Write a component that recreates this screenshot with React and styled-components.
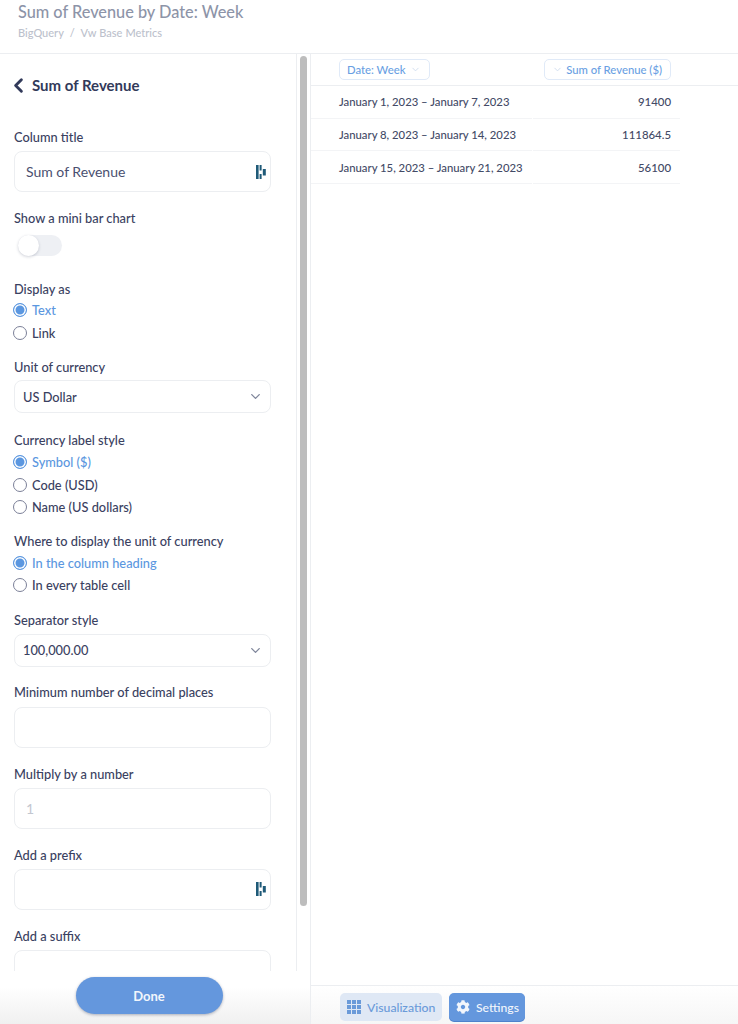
import React from 'react'
import styled, { createGlobalStyle } from 'styled-components'
import { ChevronDown, ChevronLeft } from 'lucide-react'
import { FaCog } from 'react-icons/fa'

const GlobalStyle = createGlobalStyle`
  html, body {
    margin: 0;
    background: #fff;
  }
  * {
    box-sizing: border-box;
  }
  body {
    font-family: Lato, "Liberation Sans", sans-serif;
    color: #2e3553;
  }
`

const Page = styled.div`
  width: 738px;
  height: 1024px;
  display: flex;
  flex-direction: column;
  overflow: hidden;
`

const Header = styled.header`
  height: 54px;
  flex: none;
  padding-left: 18px;
  border-bottom: 1px solid #eceef1;
`

const Title = styled.h1`
  margin: 0;
  padding-top: 1px;
  font-size: 16.3px;
  line-height: 22px;
  font-weight: 500;
  color: #8d94a8;
`

const Crumbs = styled.div`
  margin-top: 3px;
  font-size: 11px;
  line-height: 14px;
  font-weight: 500;
  color: #bcc1cc;
  word-spacing: 0.3px;
`

const Body = styled.div`
  flex: 1;
  display: flex;
  min-height: 0;
`

const Sidebar = styled.aside`
  position: relative;
  width: 311px;
  flex: none;
  display: flex;
  flex-direction: column;
  border-right: 1px solid #eceef1;
`

const Scroller = styled.div`
  flex: 1;
  min-height: 0;
  overflow: hidden;
  padding: 0 0 0 14px;
  margin-right: 13px;
  border-right: 1px solid #eceef1;
`

const Thumb = styled.div`
  position: absolute;
  top: 2px;
  right: 3px;
  width: 7px;
  height: 850px;
  border-radius: 4px;
  background: #bdbdbd;
`

const BackRow = styled.div`
  display: flex;
  align-items: center;
  height: 20px;
  margin-top: 21px;
  margin-bottom: 33px;
  gap: 2px;
  font-size: 15px;
  font-weight: 700;
  color: #323a5a;
  svg {
    margin-left: -7px;
  }
`

const Field = styled.div`
  width: 257px;
  margin-bottom: ${p => p.$after || 17}px;
`

const Label = styled.div`
  font-size: 12.8px;
  line-height: 18px;
  font-weight: 500;
  color: #3a4161;
  margin-bottom: ${p => p.$gap ?? 5}px;
`

const InputBox = styled.div`
  position: relative;
  height: 41px;
  padding-left: 11px;
  display: flex;
  align-items: center;
  border: 1px solid #eceef1;
  border-radius: 8px;
  font-size: 14px;
  color: ${p => (p.$placeholder ? '#c3c7d0' : '#4a5070')};
`

const SelectBox = styled.div`
  height: 33px;
  padding: 0 7px 0 8px;
  display: flex;
  align-items: center;
  justify-content: space-between;
  border: 1px solid #eceef1;
  border-radius: 8px;
  font-size: 12.8px;
  font-weight: 500;
  color: #3a4161;
  svg {
    color: #7f869b;
  }
`

const Toggle = styled.div`
  position: relative;
  width: 44px;
  height: 21px;
  margin-left: 4px;
  border-radius: 11px;
  background: #eef0f4;
  &::after {
    content: '';
    position: absolute;
    left: 0;
    top: 0;
    width: 21px;
    height: 21px;
    border-radius: 50%;
    background: #fff;
    box-shadow: 0 1px 3px rgba(40, 50, 80, 0.22);
  }
`

const RadioRow = styled.div`
  display: flex;
  align-items: center;
  gap: 5px;
  height: 22.5px;
  font-size: 12.8px;
  font-weight: 500;
  color: ${p => (p.$on ? '#5b97e0' : '#3a4161')};
`

const Dot = styled.span`
  width: 14px;
  height: 14px;
  margin-left: -1px;
  flex: none;
  border-radius: 50%;
  border: 1.5px solid ${p => (p.$on ? '#5b97e0' : '#7b8098')};
  background: ${p => (p.$on ? '#5b97e0' : '#fff')};
  box-shadow: ${p => (p.$on ? 'inset 0 0 0 1.5px #fff' : 'none')};
`

const Footer = styled.div`
  height: 53px;
  flex: none;
  display: flex;
  justify-content: center;
  padding: 6px 12px 0 0;
  background: linear-gradient(#fff 30%, #f0f0f0);
`

const DoneButton = styled.button`
  width: 147px;
  height: 37px;
  border: 0;
  border-radius: 19px;
  background: #6497dd;
  box-shadow: 0 1px 3px rgba(60, 70, 100, 0.4);
  color: #f2f6fc;
  font-family: inherit;
  font-size: 13px;
  font-weight: 700;
`

const Main = styled.main`
  flex: 1;
  display: flex;
  flex-direction: column;
  min-width: 0;
`

const TableArea = styled.div`
  flex: 1;
  min-height: 0;
`

const Grid = styled.div`
  width: 369px;
  display: grid;
  grid-template-columns: 221px 148px;
`

const HeadRow = styled.div`
  height: 32px;
  padding: 5px 67px 0 28px;
  display: flex;
  justify-content: space-between;
  align-items: flex-start;
  border-bottom: 1px solid #eceef1;
`

const Chip = styled.div`
  height: 21px;
  width: ${p => p.$w}px;
  padding: 0 8px 0 7px;
  display: flex;
  align-items: center;
  justify-content: space-between;
  white-space: nowrap;
  border: 1px solid #e0eaf8;
  border-radius: 5px;
  font-size: 11.3px;
  font-weight: 500;
  color: #6a9fe3;
  svg {
    color: #cfdcee;
  }
`

const Cell = styled.div`
  height: 32.7px;
  display: flex;
  align-items: center;
  border-bottom: 1px solid #f3f4f6;
  font-size: 11.3px;
  font-weight: 500;
  color: #434a66;
  ${p => (p.$right
    ? 'justify-content: flex-end; padding-right: 9px; margin-left: 1px; font-size: 11.4px;'
    : 'padding-left: 28px;')}
`

const BottomBar = styled.div`
  height: 39px;
  flex: none;
  display: flex;
  gap: 7px;
  padding: 7px 0 0 29px;
  border-top: 1px solid #eceef1;
  background: linear-gradient(#fff, #f6f6f6);
`

const TabButton = styled.div`
  width: ${p => p.$w}px;
  height: 28px;
  display: flex;
  align-items: center;
  gap: 6px;
  padding-left: 7px;
  border-radius: 5px;
  font-size: 12.2px;
  font-weight: 500;
  background: ${p => (p.$active ? '#6497dd' : '#dfe8f5')};
  color: ${p => (p.$active ? '#f2f6fc' : '#6a9ad9')};
  box-shadow: ${p => (p.$active ? '0 1px 0 #4e82cc' : 'none')};
`

const IconSlot = styled.span`
  position: absolute;
  right: 4px;
  top: 50%;
  height: 14px;
  margin-top: -7px;
  display: flex;
`

const BarcodeIcon = () => (
  <IconSlot>
    <svg width="10" height="14" viewBox="0 0 10 14">
      <g fill="#1f5a78">
        <rect x="0" y="0" width="2.6" height="14" />
        <rect x="3.6" y="0" width="2" height="5.5" />
        <rect x="3.6" y="9" width="2" height="5" />
        <rect x="6.8" y="4" width="3" height="6.5" />
      </g>
    </svg>
  </IconSlot>
)

const GridIcon = () => (
  <svg width="14" height="14" viewBox="0 0 14 14">
    <g fill="#6a9ad9">
      {[0, 5, 10].map(y =>
        [0, 5, 10].map(x => <rect key={`${x}-${y}`} x={x} y={y} width="4" height="4" />)
      )}
    </g>
  </svg>
)

const Radios = ({ items }) => (
  <>
    {items.map((item, i) => (
      <RadioRow key={item} $on={i === 0}>
        <Dot $on={i === 0} />
        {item}
      </RadioRow>
    ))}
  </>
)

const rows = [
  ['January 1, 2023 – January 7, 2023', '91400'],
  ['January 8, 2023 – January 14, 2023', '111864.5'],
  ['January 15, 2023 – January 21, 2023', '56100'],
]

export default function App() {
  return (
    <Page>
      <GlobalStyle />
      <Header>
        <Title>Sum of Revenue by Date: Week</Title>
        <Crumbs>BigQuery&nbsp; / &nbsp;Vw Base Metrics</Crumbs>
      </Header>
      <Body>
        <Sidebar>
          <Scroller>
            <BackRow>
              <ChevronLeft size={23} strokeWidth={3} color="#323a5a" />
              Sum of Revenue
            </BackRow>
            <Field>
              <Label>Column title</Label>
              <InputBox>
                Sum of Revenue
                <BarcodeIcon />
              </InputBox>
            </Field>
            <Field $after={24}>
              <Label $gap={8}>Show a mini bar chart</Label>
              <Toggle />
            </Field>
            <Field $after={14}>
              <Label $gap={1}>Display as</Label>
              <Radios items={['Text', 'Link']} />
            </Field>
            <Field $after={18}>
              <Label $gap={4}>Unit of currency</Label>
              <SelectBox>
                US Dollar
                <ChevronDown size={15} strokeWidth={2.2} />
              </SelectBox>
            </Field>
            <Field $after={13}>
              <Label $gap={2}>Currency label style</Label>
              <Radios items={['Symbol ($)', 'Code (USD)', 'Name (US dollars)']} />
            </Field>
            <Field $after={14}>
              <Label $gap={2}>Where to display the unit of currency</Label>
              <Radios items={['In the column heading', 'In every table cell']} />
            </Field>
            <Field $after={16}>
              <Label>Separator style</Label>
              <SelectBox>
                100,000.00
                <ChevronDown size={15} strokeWidth={2.2} />
              </SelectBox>
            </Field>
            <Field>
              <Label $gap={6}>Minimum number of decimal places</Label>
              <InputBox />
            </Field>
            <Field>
              <Label>Multiply by a number</Label>
              <InputBox $placeholder>1</InputBox>
            </Field>
            <Field>
              <Label>Add a prefix</Label>
              <InputBox>
                <BarcodeIcon />
              </InputBox>
            </Field>
            <Field>
              <Label>Add a suffix</Label>
              <InputBox />
            </Field>
          </Scroller>
          <Thumb />
          <Footer>
            <DoneButton>Done</DoneButton>
          </Footer>
        </Sidebar>
        <Main>
          <TableArea>
            <HeadRow>
              <Chip $w={91}>
                Date: Week
                <ChevronDown size={11} />
              </Chip>
              <Chip $w={127}>
                <ChevronDown size={11} />
                Sum of Revenue ($)
              </Chip>
            </HeadRow>
            <Grid>
              {rows.map(([range, value]) => (
                <React.Fragment key={range}>
                  <Cell>{range}</Cell>
                  <Cell $right>{value}</Cell>
                </React.Fragment>
              ))}
            </Grid>
          </TableArea>
          <BottomBar>
            <TabButton $w={102}>
              <GridIcon />
              Visualization
            </TabButton>
            <TabButton $w={76} $active>
              <FaCog size={14} />
              Settings
            </TabButton>
          </BottomBar>
        </Main>
      </Body>
    </Page>
  )
}
